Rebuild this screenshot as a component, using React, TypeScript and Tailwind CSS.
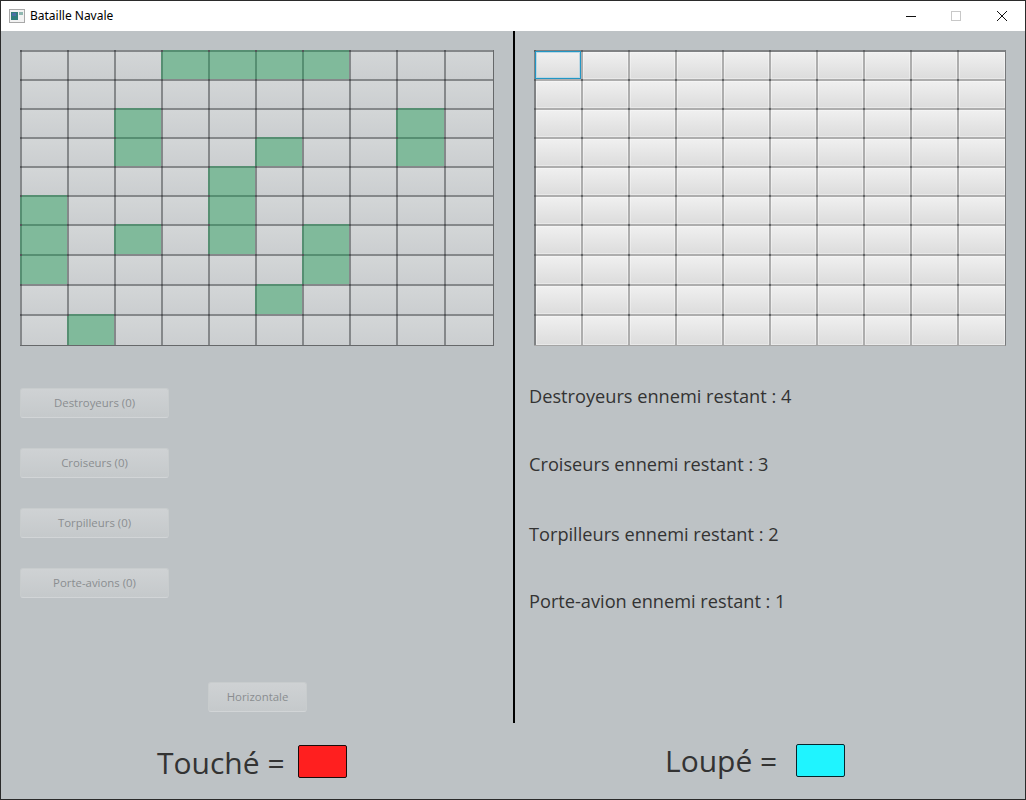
const ROWS = '29px 29px 29px 29px 29px 29px 30px 30px 30px 31px';

const SHIPS: Record<number, number[]> = {
  0: [3, 4, 5, 6],
  2: [2, 8],
  3: [2, 5, 8],
  4: [4],
  5: [0, 4],
  6: [0, 2, 4, 6],
  7: [0, 6],
  8: [5],
  9: [1]
};

const cells = Array.from({ length: 100 }, (_, i) => ({ row: Math.floor(i / 10), col: i % 10 }));

function PlayerGrid() {
  return (
    <div
      className="grid w-[474px] border-b border-r border-[#66686a] bg-[#66686a]"
      style={{ gridTemplateColumns: 'repeat(8, 47px) 48px 49px', gridTemplateRows: ROWS }}
    >
      {cells.map(({ row, col }) => {
        const isShip = SHIPS[row]?.includes(col);
        return (
          <div
            key={`${row}-${col}`}
            className={`relative border-l-2 border-t-2 ${
              isShip
                ? 'border-[#568f72] bg-[#80ba9b]'
                : 'border-[#85888a] bg-gradient-to-b from-[#d3d6d7] to-[#cbced0]'
            }`}
          >
            <span className="absolute -left-0.5 -top-0.5 h-0.5 w-0.5 bg-[#55575a]" />
          </div>
        );
      })}
    </div>
  );
}

function EnemyGrid() {
  return (
    <div
      className="grid w-[472px] border-b border-r border-[#77797b] border-b-[#a4a4a4] bg-[#a9a9a9]"
      style={{ gridTemplateColumns: 'repeat(9, 47px) 48px', gridTemplateRows: ROWS }}
    >
      {cells.map(({ row, col }) => {
        const isFocused = row === 0 && col === 0;
        return (
          <div
            key={`${row}-${col}`}
            className={`relative border-l-2 border-t-2 bg-gradient-to-b from-[#f0f0f0] to-[#dcdcdc] shadow-[inset_0_0_0_1px_rgba(255,255,255,0.35)] ${
              row === 0 ? 'border-t-[#808284]' : 'border-t-[#adadad]'
            } ${col === 0 ? 'border-l-[#808284]' : 'border-l-[#adadad]'}`}
          >
            <span className="absolute -left-0.5 -top-0.5 h-0.5 w-0.5 bg-[#5f6163]" />
            {isFocused && (
              <span className="absolute -left-px -top-px bottom-0 right-0 z-10 border border-[#2296c4] shadow-[inset_0_0_0_1px_#bcd6e2]" />
            )}
          </div>
        );
      })}
    </div>
  );
}

function DisabledButton({ label, width }: { label: string; width: string }) {
  return (
    <div
      className={`flex h-[30px] items-center justify-center rounded-[3px] border border-[#c8cccd] border-b-[#d2d5d7] bg-gradient-to-b from-[#cfd2d4] to-[#c5c9cb] text-[11.4px] text-[#8a8d90] ${width}`}
    >
      {label}
    </div>
  );
}

function WindowIcon() {
  return (
    <svg width="16" height="14" viewBox="0 0 16 14">
      <rect x="0.5" y="0.5" width="15" height="13" fill="#f2f2f2" stroke="#a8a8a8" />
      <rect x="2" y="3" width="7" height="8" fill="#2f7d7a" />
      <rect x="3" y="4" width="4" height="3" fill="#4a6fa5" />
      <rect x="10" y="3" width="4" height="3" fill="#8fb7b0" />
    </svg>
  );
}

export default function App() {
  return (
    <div className="flex h-[800px] w-[1026px] flex-col overflow-hidden border border-[#2b2b2b] bg-[#bdc2c5] font-['Open_Sans',sans-serif]">
      <div className="flex h-[30px] shrink-0 items-center bg-white pl-[8px]">
        <WindowIcon />
        <span className="ml-[5px] font-['Noto_Sans',sans-serif] text-[12px] text-black">Bataille Navale</span>
        <div className="ml-auto flex items-center pr-[18px]">
          <svg width="10" height="10" viewBox="0 0 10 10" className="mr-[35px]">
            <path d="M0 5.5H10" stroke="#111" fill="none" />
          </svg>
          <svg width="10" height="10" viewBox="0 0 10 10" className="mr-[36px]">
            <rect x="0.5" y="0.5" width="9" height="9" stroke="#c8c8c8" fill="none" />
          </svg>
          <svg width="10" height="10" viewBox="0 0 10 10">
            <path d="M0 0L10 10M10 0L0 10" stroke="#111" fill="none" />
          </svg>
        </div>
      </div>

      <div className="flex h-[692px] shrink-0">
        <div className="flex w-[512px] flex-col pl-[19px] pt-[19px]">
          <PlayerGrid />
          <div className="mt-[42px] flex flex-col gap-[30px]">
            <DisabledButton label="Destroyeurs (0)" width="w-[149px]" />
            <DisabledButton label="Croiseurs (0)" width="w-[149px]" />
            <DisabledButton label="Torpilleurs (0)" width="w-[149px]" />
            <DisabledButton label="Porte-avions (0)" width="w-[149px]" />
          </div>
          <div className="mt-[84px] pl-[188px]">
            <DisabledButton label="Horizontale" width="w-[99px]" />
          </div>
        </div>

        <div className="h-full w-[2px] bg-black" />

        <div className="flex flex-1 flex-col pl-[19px] pt-[19px]">
          <EnemyGrid />
          <div className="-ml-[5px] mt-[38px] flex flex-col text-[18.2px] leading-[24px] text-[#333333]">
            <p>Destroyeurs ennemi restant : 4</p>
            <p className="mt-[44px]">Croiseurs ennemi restant : 3</p>
            <p className="mt-[46px]">Torpilleurs ennemi restant : 2</p>
            <p className="mt-[43px]">Porte-avion ennemi restant : 1</p>
          </div>
        </div>
      </div>

      <div className="flex flex-1 text-[30px] leading-[40px] text-[#333333]">
        <div className="flex w-[513px] items-start pl-[156px] pt-[20px]">
          <span>Touché =</span>
          <div className="ml-[13px] mt-[2px] h-[33px] w-[49px] rounded-[2px] border border-[#1a0a0a] bg-[#ff1f1f]" />
        </div>
        <div className="flex flex-1 items-start pl-[151px] pt-[18px]">
          <span>Loupé =</span>
          <div className="ml-[19px] mt-[3px] h-[33px] w-[49px] rounded-[2px] border border-[#06262c] bg-[#1ff4ff]" />
        </div>
      </div>
    </div>
  );
}
